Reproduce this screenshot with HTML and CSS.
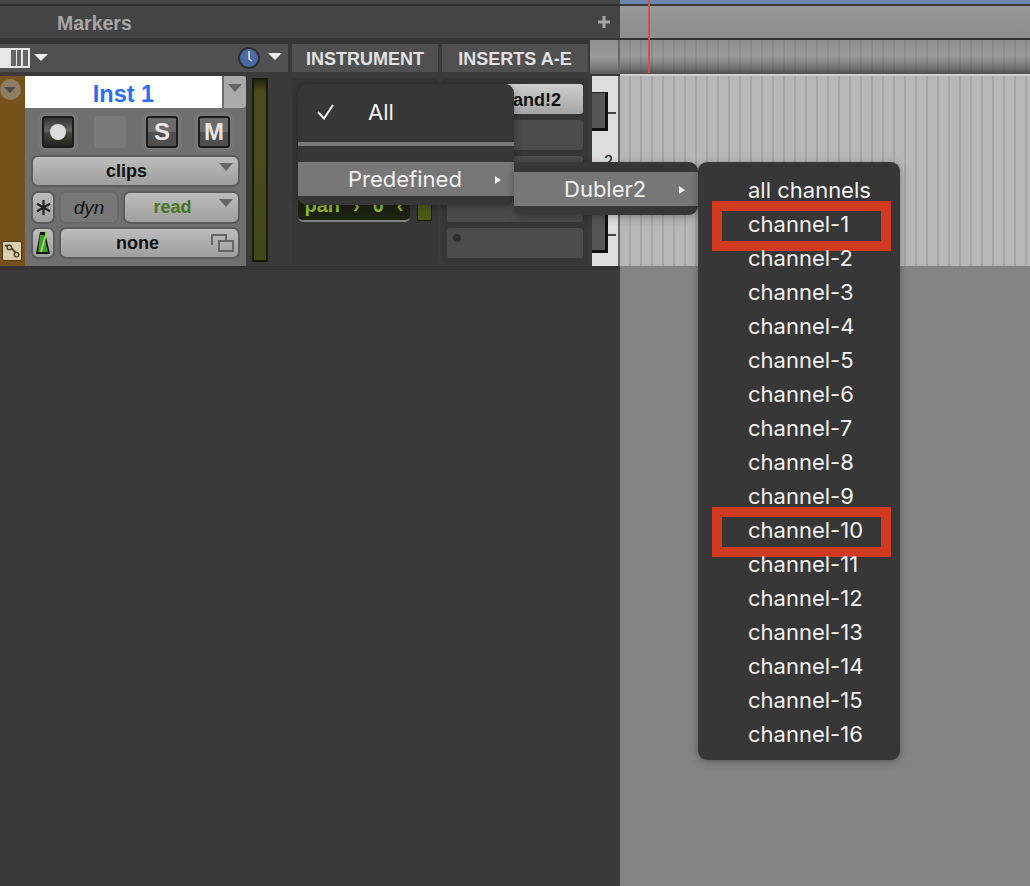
FILE: index.html
```html
<!DOCTYPE html>
<html>
<head>
    <meta charset="utf-8">
    <link rel="stylesheet" href="styles.css">
</head>
<body>
    <div class="edit">
        <div class="left">
            <div class="topline"></div>
            <div class="markers">
                <span class="markers-name">Markers</span>
                <svg class="plus" width="12" height="12" viewBox="0 0 12 12"><path d="M4.500 0h3v4.500H12v3H7.500V12h-3V7.500H0v-3h4.500z" fill="#a8a8a8"/></svg>
            </div>
            <div class="heads">
                <div class="head head-main">
                    <svg width="50" height="20" viewBox="0 0 50 20">
                        <rect x="0" y="0" width="30" height="20" fill="#e8e8e8"/>
                        <rect x="11" y="2" width="5" height="16" fill="#666"/>
                        <rect x="17" y="2" width="4" height="16" fill="#666"/>
                        <rect x="23" y="2" width="5" height="16" fill="#666"/>
                        <path d="M34 6h14l-7 7z" fill="#eee"/>
                    </svg>
                    <span class="grow"></span>
                    <svg width="50" height="24" viewBox="0 0 50 24">
                        <circle cx="11" cy="12" r="11" fill="#2f2f2f"/>
                        <circle cx="11" cy="12" r="9" fill="#4a6aa5"/>
                        <path d="M11 5v8l3 2" stroke="#e8e8e8" stroke-width="1.500" fill="none"/>
                        <path d="M30 7h14l-7 7z" fill="#eee"/>
                    </svg>
                </div>
                <div class="head head-inst">INSTRUMENT</div>
                <div class="head head-ins">INSERTS A-E</div>
                <div class="head-ruler"></div>
            </div>
            <div class="track">
                <div class="colorbar">
                    <div class="colorbar-knob"></div>
                    <div class="colorbar-link">
                        <svg width="20" height="18" viewBox="0 0 20 18"><path d="M2 3h5l9 10" stroke="#4b3a12" stroke-width="2" fill="none"/><circle cx="7" cy="5" r="2.500" fill="#d8cfae" stroke="#4b3a12" stroke-width="1.500"/><circle cx="15" cy="13" r="2.500" fill="#d8cfae" stroke="#4b3a12" stroke-width="1.500"/></svg>
                    </div>
                </div>
                <div class="strip">
                    <div class="namebar">
                        <div class="trackname">Inst 1</div>
                        <div class="namearrow"><i class="tri"></i></div>
                    </div>
                    <div class="strip-body">
                        <div class="btnrow">
                            <div class="sq sq-rec"><i class="recdot"></i></div>
                            <div class="sq sq-off"></div>
                            <div class="sq">S</div>
                            <div class="sq">M</div>
                        </div>
                        <div class="pill pill-clips">clips<i class="tri tri-r"></i></div>
                        <div class="pillrow pillrow-dyn">
                            <div class="pill pill-sm">
                                <svg width="15" height="15" viewBox="0 0 15 15"><path d="M7.500 0v15M1 3.700l13 7.600M14 3.700L1 11.300" stroke="#222" stroke-width="2.200"/></svg>
                            </div>
                            <div class="pill pill-dyn">dyn</div>
                            <div class="pill pill-read">read<i class="tri tri-r"></i></div>
                        </div>
                        <div class="pillrow">
                            <div class="pill pill-sm">
                                <svg width="16" height="24" viewBox="0 0 16 24"><path d="M5 1h5l5 22H1z" fill="#111"/><path d="M5 4h4l4 17H3z" fill="#3f9a33"/><path d="M6 21L12 0" stroke="#8fe04a" stroke-width="2"/></svg>
                            </div>
                            <div class="pill pill-none">none
                                <svg class="groups" width="23" height="19" viewBox="0 0 23 19"><path d="M1 11V1h14v5M8 7h14v10H8z" stroke="#666" stroke-width="2" fill="none"/></svg>
                            </div>
                        </div>
                    </div>
                </div>
                <div class="meter"></div>
                <div class="col col-inst">
                    <div class="pandisplay"><span>pan</span><span>›</span><span>0</span><span>‹</span></div>
                    <div class="panmeter"></div>
                </div>
                <div class="col col-ins">
                    <div class="slot slot-on">and!2</div>
                    <div class="slot"></div>
                    <div class="slot"></div>
                    <div class="slot"></div>
                    <div class="slot"><i class="slotdot"></i></div>
                </div>
                <div class="sends">
                    <div class="fader"></div>
                    <div class="sendnum">2</div>
                    <div class="fader"></div>
                </div>
            </div>
        </div>
        <div class="right">
            <div class="right-top"></div>
            <div class="right-markers"></div>
            <div class="ruler"></div>
            <div class="lane"></div>
            <div class="playhead"></div>
        </div>
    </div>

    <div class="menu menu-one">
        <div class="item item-all">
            <svg class="check" width="18" height="16" viewBox="0 0 18 16"><path d="M1 8l6 6.500L16 1" stroke="#f4f4f4" stroke-width="2" fill="none"/></svg>
            All
        </div>
        <div class="sep"></div>
        <div class="item item-hl item-pre">Predefined<i class="sub"></i></div>
    </div>
    <div class="menu menu-two">
        <div class="item item-hl item-dub">Dubler2<i class="sub"></i></div>
    </div>
    <div class="menu menu-three">
        <div class="item">all channels</div>
        <div class="item marked">channel-1</div>
        <div class="item">channel-2</div>
        <div class="item">channel-3</div>
        <div class="item">channel-4</div>
        <div class="item">channel-5</div>
        <div class="item">channel-6</div>
        <div class="item">channel-7</div>
        <div class="item">channel-8</div>
        <div class="item">channel-9</div>
        <div class="item marked">channel-10</div>
        <div class="item">channel-11</div>
        <div class="item">channel-12</div>
        <div class="item">channel-13</div>
        <div class="item">channel-14</div>
        <div class="item">channel-15</div>
        <div class="item">channel-16</div>
    </div>
</body>
</html>
```
FILE: styles.css
```css
html, body {
    margin: 0;
    height: 886px;
    overflow: hidden;
    background: #3a3a3a;
    font-family: "Liberation Sans", Arial, sans-serif;
}

.edit {
    display: flex;
    height: 886px;
}

.left {
    width: 620px;
    background: #3a3a3a;
}

.topline {
    height: 4px;
    background: #454545;
    border-bottom: 2px solid #2f2f2f;
}

.markers {
    height: 32px;
    box-sizing: content-box;
    background: #444;
    display: flex;
    align-items: center;
    justify-content: space-between;
    padding: 0 10px 0 57px;
    border-bottom: 6px solid #353535;
}

.markers-name {
    font-size: 19.500px;
    font-weight: bold;
    color: #a6a6a6;
    padding-top: 3px;
}

.heads {
    display: flex;
    height: 28px;
    gap: 4px;
    background: #383838;
}

.head {
    background: #505050;
    color: #e2e2e2;
    font-size: 18px;
    font-weight: bold;
    display: flex;
    align-items: center;
    justify-content: center;
    padding-top: 2px;
    box-sizing: border-box;
}

.head-main {
    width: 288px;
    justify-content: flex-start;
    padding: 0;
}

.head-inst {
    width: 146px;
}

.head-ins {
    width: 146px;
}

.head-ruler {
    width: 30px;
    height: 34px;
    margin: -4px 0 0 -2px;
    box-sizing: border-box;
    border-right: 2px solid #666;
    background: linear-gradient(#8f8f8f, #9a9a9a 50%, #7c7c7c 80%, #5b5b5b);
}

.grow {
    flex: 1;
}

.track {
    display: flex;
    height: 190px;
    margin-top: 4px;
    border-bottom: 4px solid #333;
    background: #3a3a3a;
}

.colorbar {
    width: 25px;
    background: #76511a;
    display: flex;
    flex-direction: column;
    justify-content: space-between;
}

.colorbar-knob {
    width: 21px;
    height: 21px;
    margin-top: 3px;
    border-radius: 50%;
    background: #8d7d62;
    position: relative;
}

.colorbar-knob::after {
    content: "";
    position: absolute;
    left: 4px;
    top: 8px;
    border: 6px solid transparent;
    border-top: 6px solid #4a4a4a;
    border-bottom: 0;
}

.colorbar-link {
    width: 20px;
    height: 20px;
    margin: 0 0 5px 2px;
    background: #d8cfae;
    border: 1px solid #4b3a12;
    box-sizing: border-box;
    border-radius: 2px;
    display: flex;
}

.strip {
    width: 221px;
    background: #6f6f6f;
    display: flex;
    flex-direction: column;
}

.namebar {
    display: flex;
    height: 32px;
    justify-content: space-between;
}

.trackname {
    width: 197px;
    background: #fff;
    color: #2b6ef2;
    font-size: 23.500px;
    font-weight: bold;
    text-align: center;
    line-height: 36px;
}

.namearrow {
    width: 22px;
    background: #aaa;
    border-radius: 0 4px 4px 0;
    display: flex;
    justify-content: center;
    padding-top: 8px;
    box-sizing: border-box;
}

.tri {
    display: block;
    width: 0;
    height: 0;
    border: 7px solid transparent;
    border-top: 8px solid #666;
    border-bottom: 0;
}

.tri-r {
    position: absolute;
    right: 5px;
    top: 6px;
}

.strip-body {
    padding: 4px 6px 0;
    display: flex;
    flex-direction: column;
}

.btnrow {
    display: flex;
    gap: 20px;
    height: 40px;
    padding-left: 11px;
    margin-bottom: 3px;
    align-items: center;
}

.sq {
    width: 32px;
    height: 32px;
    box-sizing: border-box;
    border: 2px solid #1c1c1c;
    outline: 4px solid #767676;
    border-radius: 3px;
    background: linear-gradient(#6b6b6b 50%, #4f4f4f 50%);
    color: #e6e6e6;
    font-size: 24px;
    font-weight: bold;
    text-align: center;
    line-height: 28px;
}

.sq-rec {
    background: linear-gradient(#333 0, #666 45%, #454535 55%, #222 100%);
    display: flex;
    align-items: center;
    justify-content: center;
}

.recdot {
    width: 16px;
    height: 16px;
    border-radius: 50%;
    background: #ddd;
}

.sq-off {
    background: #7a7a7a;
    border: none;
    outline: none;
}

.pill {
    position: relative;
    height: 32px;
    box-sizing: border-box;
    border-radius: 7px;
    border: 2px solid #5c5c5c;
    background: linear-gradient(#bdbdbd, #9e9e9e);
    color: #111;
    font-size: 18px;
    font-weight: bold;
    text-align: center;
    line-height: 29px;
}

.pill-clips {
    margin-bottom: 4px;
    padding-right: 18px;
}

.pillrow {
    display: flex;
    gap: 4px;
    height: 32px;
    margin-bottom: 3px;
}

.pillrow-dyn {
    height: 33px;
}

.pillrow .pill {
    height: auto;
}

.pill-sm {
    width: 24px;
    flex: none;
    display: flex;
    align-items: center;
    justify-content: center;
}

.pill-dyn {
    width: 60px;
    background: #777;
    border-color: #6a6a6a;
    font-style: italic;
    font-weight: normal;
    color: #111;
    font-size: 19px;
}

.pill-read {
    flex: 1;
    color: #47761f;
    padding-right: 18px;
}

.pill-none {
    flex: 1;
    padding-right: 24px;
}

.groups {
    position: absolute;
    right: 4px;
    top: 5px;
}

.meter {
    width: 16px;
    height: 184px;
    margin: 2px 24px 0 6px;
    box-sizing: border-box;
    border: 2px solid #1a1a0c;
    background: linear-gradient(#232310 0, #4c4a18 6%, #4c4a18 40%, #3f4a14 100%);
}

.col {
    width: 146px;
    height: 186px;
    margin-top: 2px;
    background: #363636;
    border-radius: 4px;
    box-sizing: border-box;
}

.col-inst {
    margin-right: 4px;
    padding: 120px 6px 0;
    display: flex;
    gap: 7px;
    align-items: flex-start;
}

.pandisplay {
    width: 112px;
    height: 24px;
    box-sizing: border-box;
    background: #1d2110;
    border-radius: 5px;
    border-bottom: 2px solid #808080;
    color: #8fc02f;
    font-size: 20px;
    font-weight: bold;
    display: flex;
    justify-content: space-around;
    line-height: 15px;
    overflow: hidden;
}

.panmeter {
    width: 15px;
    height: 23px;
    background: #4d5a14;
    border: 1px solid #1c1c0c;
    box-sizing: border-box;
}

.col-ins {
    padding: 6px 5px 0;
    display: flex;
    flex-direction: column;
    gap: 6px;
}

.slot {
    height: 30px;
    background: #4b4b4b;
    border-radius: 3px;
    position: relative;
}

.slot-on {
    background: linear-gradient(#cfcfcf, #a5a5a5);
    color: #111;
    font-size: 18px;
    font-weight: bold;
    text-align: right;
    padding-right: 22px;
    line-height: 32px;
}

.slotdot {
    position: absolute;
    left: 6px;
    top: 6px;
    width: 8px;
    height: 8px;
    border-radius: 50%;
    background: #2f2f2f;
}

.sends {
    width: 28px;
    margin-left: 4px;
    background: #dedede;
    border-right: 2px solid #666;
    display: flex;
    flex-direction: column;
    padding-top: 16px;
    box-sizing: border-box;
    align-items: flex-start;
}

.fader {
    width: 16px;
    height: 39px;
    background: #555;
    border-right: 3px solid #111;
    border-bottom: 3px solid #111;
    border-top: 1px solid #222;
    box-sizing: border-box;
    position: relative;
    flex: none;
}

.fader::after {
    content: "";
    position: absolute;
    left: 16px;
    top: 19px;
    width: 8px;
    height: 2px;
    background: #444;
}

.sendnum {
    font-size: 16px;
    padding: 22px 0 0 12px;
    height: 83px;
    color: #222;
    box-sizing: border-box;
    flex: none;
}

.right {
    width: 410px;
    background: #848484;
    position: relative;
}

.right-top {
    height: 4px;
    background: #6b87ad;
    border-bottom: 2px solid #3b3b3b;
}

.right-markers {
    height: 32px;
    background: linear-gradient(#979797, #8e8e8e);
    border-bottom: 2px solid #333;
}

.ruler {
    height: 32px;
    background:
        repeating-linear-gradient(90deg, transparent 0 9px, rgba(0,0,0,0.07) 9px 11px),
        linear-gradient(#8f8f8f, #9a9a9a 50%, #7c7c7c 80%, #5b5b5b);
    border-bottom: 2px solid #555;
}

.lane {
    height: 192px;
    border-top: 2px solid #cfcfcf;
    box-sizing: border-box;
    background: repeating-linear-gradient(90deg, #b7b7b7 0 9px, #a6a6a6 9px 11px);
}

.playhead {
    position: absolute;
    left: 28px;
    top: 0;
    width: 2px;
    height: 73px;
    background: #cb5540;
}

.menu {
    position: absolute;
    box-sizing: border-box;
    background: #373737;
    border-radius: 9px;
    box-shadow: 0 2px 8px rgba(0,0,0,0.3);
    color: #f2f2f2;
    font-family: Inter, Roboto, sans-serif;
    font-size: 22px;
}

.item {
    height: 34px;
    line-height: 35px;
    position: relative;
    white-space: nowrap;
}

.item-hl {
    background: #777;
}

.sub {
    position: absolute;
    right: 13px;
    top: 14px;
    width: 0;
    height: 0;
    border: 4px solid transparent;
    border-left: 6px solid #eee;
    border-right: 0;
}

.menu-one {
    left: 298px;
    top: 84px;
    width: 216px;
    height: 121px;
    padding-top: 11px;
}

.item-all {
    padding-left: 70px;
}

.check {
    position: absolute;
    left: 19px;
    top: 9px;
}

.sep {
    height: 4px;
    margin: 13px 0 16px;
    background: #777;
}

.item-pre {
    padding-left: 50px;
}

.menu-two {
    left: 514px;
    top: 162px;
    width: 184px;
    height: 53px;
    padding-top: 10px;
}

.item-dub {
    padding-left: 50px;
}

.menu-three {
    left: 698px;
    top: 162px;
    width: 202px;
    height: 598px;
    padding-top: 11px;
}

.menu-three .item {
    padding-left: 50px;
}

.marked::after {
    content: "";
    position: absolute;
    left: 14px;
    right: 9px;
    top: -6px;
    bottom: -10px;
    border: 10px solid #d13a1f;
}
```
